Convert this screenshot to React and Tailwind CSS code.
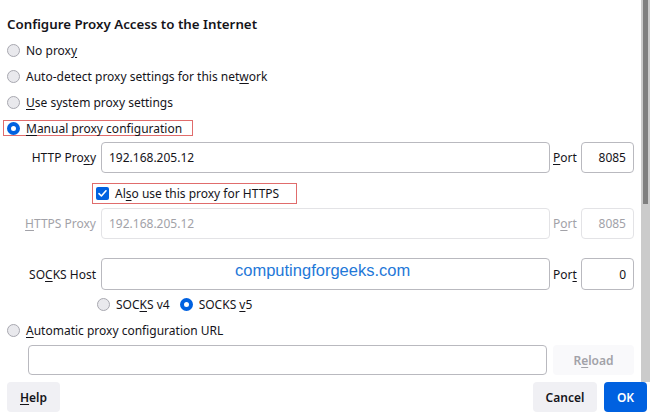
import React from "react";

const U = ({ children }) => (
  <span className="underline underline-offset-[2px] decoration-[1px]">{children}</span>
);

const Radio = ({ checked }) =>
  checked ? (
    <span className="inline-block w-[13px] h-[13px] rounded-full border-[4px] border-[#0061e0] bg-white shrink-0" />
  ) : (
    <span className="inline-block w-[13px] h-[13px] rounded-full border border-[#a8a8b0] bg-[#e9e9ed] shrink-0" />
  );

const Checkbox = () => (
  <span className="inline-flex items-center justify-center w-[13px] h-[13px] rounded-[2px] bg-[#0061e0] shrink-0">
    <svg width="11" height="11" viewBox="0 0 11 11" fill="none">
      <path d="M2 5.6 L4.4 8 L9 2.8" stroke="white" strokeWidth="1.6" strokeLinecap="round" strokeLinejoin="round" />
    </svg>
  </span>
);

const Input = ({ value, disabled, right, className = "" }) => (
  <div
    className={`h-full flex items-center rounded-[4px] border px-[7px] ${
      disabled ? "border-[#e3e3e6] text-[#a2a2a8]" : "border-[#b9b9bf] text-[#15141a]"
    } ${right ? "justify-end" : ""} ${className}`}
  >
    {value}
  </div>
);

export default function App() {
  return (
    <div className="w-[659px] h-[420px] bg-white overflow-hidden text-[12px] text-[#15141a] font-['Noto_Sans',sans-serif] leading-[17px]">
      <div className="flex h-[382px]">
        <div className="flex-1 pl-[7px] pr-[7px] flex flex-col">
          <div className="pt-[14px] h-[34px] text-[13.3px] leading-[20px] font-semibold">
            Configure Proxy Access to the Internet
          </div>
          <div className="mt-[3px] h-[26px] flex items-center gap-[6px]">
            <Radio />
            <span>
              No prox<U>y</U>
            </span>
          </div>
          <div className="h-[26px] flex items-center gap-[6px]">
            <Radio />
            <span>
              Auto-detect proxy settings for this net<U>w</U>ork
            </span>
          </div>
          <div className="h-[26px] flex items-center gap-[6px]">
            <Radio />
            <span>
              <U>U</U>se system proxy settings
            </span>
          </div>
          <div className="h-[26px] flex items-center">
            <div className="ml-[-4px] w-[190px] h-[16px] border border-[#e06c6c] flex items-center gap-[6px] pl-[3px]">
              <Radio checked />
              <span>
                <U>M</U>anual proxy configuration
              </span>
            </div>
          </div>

          <div className="mt-[1px] h-[31px] flex items-center">
            <div className="w-[90px] text-right pr-[1px]">
              HTTP Pro<U>x</U>y
            </div>
            <div className="ml-[4px] flex-1 h-full">
              <Input value="192.168.205.12" />
            </div>
            <div className="w-[31px] pl-[3px]">
              <U>P</U>ort
            </div>
            <div className="w-[53px] h-full">
              <Input value="8085" right />
            </div>
          </div>

          <div className="h-[35px] flex items-start pt-[10px]">
            <div className="ml-[85px] w-[205px] h-[21px] border border-[#e06c6c] flex items-center gap-[6px] pl-[3px]">
              <Checkbox />
              <span>
                Al<U>s</U>o use this proxy for HTTPS
              </span>
            </div>
          </div>

          <div className="h-[31px] flex items-center">
            <div className="w-[90px] text-right pr-[1px] text-[#a2a2a8]">
              <U>H</U>TTPS Proxy
            </div>
            <div className="ml-[4px] flex-1 h-full">
              <Input value="192.168.205.12" disabled />
            </div>
            <div className="w-[31px] pl-[3px] text-[#a2a2a8]">
              P<U>o</U>rt
            </div>
            <div className="w-[53px] h-full">
              <Input value="8085" right disabled />
            </div>
          </div>

          <div className="mt-[19px] h-[32px] flex items-center">
            <div className="w-[90px] text-right pr-[1px]">
              SO<U>C</U>KS Host
            </div>
            <div className="ml-[4px] flex-1 h-full relative">
              <Input value="" />
              <span className="absolute left-[134px] top-[3px] text-[16.5px] leading-[19px] text-[#1f78d8] font-['Liberation_Sans',Arial,sans-serif]">
                computingforgeeks.com
              </span>
            </div>
            <div className="w-[31px] pl-[3px]">
              Por<U>t</U>
            </div>
            <div className="w-[53px] h-full">
              <Input value="0" right />
            </div>
          </div>

          <div className="h-[28px] flex items-center pl-[90px]">
            <div className="flex items-center gap-[6px]">
              <Radio />
              <span>
                SOC<U>K</U>S v4
              </span>
            </div>
            <div className="ml-[10px] flex items-center gap-[6px]">
              <Radio checked />
              <span>
                SOCKS <U>v</U>5
              </span>
            </div>
          </div>

          <div className="h-[24px] flex items-center gap-[6px]">
            <Radio />
            <span>
              <U>A</U>utomatic proxy configuration URL
            </span>
          </div>

          <div className="mt-[3px] h-[30px] flex items-center">
            <div className="ml-[21px] w-[519px] h-full">
              <Input value="" />
            </div>
            <div className="ml-[6px] flex-1 h-full rounded-[4px] bg-[#f9f9fb] flex items-center justify-center text-[#a2a2a8] font-semibold">
              R<U>e</U>load
            </div>
          </div>
        </div>
        <div className="w-[9px] mr-[9px] bg-[#cbcbcb] flex justify-center">
          <div className="w-[5px] h-[204px] bg-[#7f7f7f]" />
        </div>
      </div>
      <div className="flex h-[30px] pl-[7px] pr-[12px]">
        <div className="w-[53px] h-full rounded-[4px] bg-[#f0f0f4] flex items-center justify-center font-semibold">
          <U>H</U>elp
        </div>
        <div className="flex-1" />
        <div className="w-[64px] h-full rounded-[4px] bg-[#f0f0f4] flex items-center justify-center font-semibold">
          Cancel
        </div>
        <div className="ml-[7px] w-[43px] h-full rounded-[4px] bg-[#0061e0] text-white flex items-center justify-center font-semibold">
          OK
        </div>
      </div>
    </div>
  );
}
